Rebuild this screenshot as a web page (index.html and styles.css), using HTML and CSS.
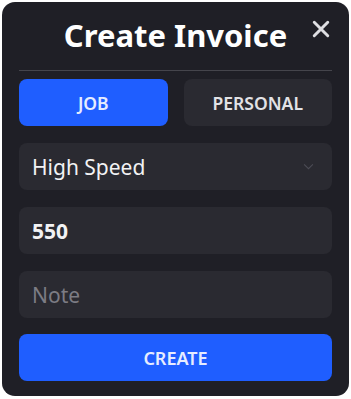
FILE: index.html
```html
<!DOCTYPE html>
<html>
<head>
  <title>Create Invoice</title>
  <link rel="stylesheet" href="styles.css">
</head>
<body>
  <div class="panel">
    <div class="panel-header">
      <h1>Create Invoice</h1>
      <button class="close-button" aria-label="Close">
        <svg viewBox="0 0 16 16" width="16" height="16">
          <path d="M2 2 L14 14 M14 2 L2 14" stroke="currentColor" stroke-width="2.6" stroke-linecap="round"/>
        </svg>
      </button>
    </div>
    <div class="divider"></div>
    <div class="type-group">
      <button class="type-button active">Job</button>
      <button class="type-button">Personal</button>
    </div>
    <div class="fields">
      <div class="field select-field">
        <span>High Speed</span>
        <svg class="chevron-icon" viewBox="0 0 12 8">
          <path d="M1 1.5 L6 6.5 L11 1.5" fill="none" stroke="currentColor" stroke-width="1.2"/>
        </svg>
      </div>
      <div class="field amount-field">550</div>
      <div class="field note-field">Note</div>
      <button class="create-button">Create</button>
    </div>
  </div>
</body>
</html>
```

FILE: styles.css
```css
body {
  font-family: "Noto Sans", "Open Sans", sans-serif;
  background-color: #ffffff;
  margin: 0;
  padding: 2px;
}
.panel {
  position: relative;
  width: 347px;
  height: 394px;
  box-sizing: border-box;
  background-color: #1f1f26;
  border-radius: 13px;
  padding: 15px 17px 0 17px;
}
.panel-header {
  text-align: center;
}
h1 {
  margin: 0;
  font-size: 31px;
  line-height: 36px;
  font-weight: 700;
  color: #ffffff;
}
.close-button {
  position: absolute;
  top: 17px;
  right: 18px;
  background: none;
  border: none;
  padding: 0;
  color: #dedee2;
  width: 20px;
  height: 20px;
  display: flex;
  align-items: center;
  justify-content: center;
}
.close-button svg {
  width: 18px;
  height: 18px;
}
.divider {
  height: 1px;
  background-color: #45454c;
  margin: 17px 0 8px 0;
}
.type-group {
  display: flex;
  gap: 16px;
  margin-bottom: 17px;
}
.type-button {
  flex: 1;
  height: 47px;
  border: none;
  border-radius: 8px;
  background-color: #2a2a31;
  color: #e2e2e6;
  font-family: inherit;
  font-size: 17.5px;
  font-weight: 600;
  text-transform: uppercase;
}
.type-button.active {
  background-color: #1f5eff;
  color: #e6ecff;
}
.fields {
  display: flex;
  flex-direction: column;
  gap: 17px;
}
.field {
  height: 47px;
  box-sizing: border-box;
  background-color: #2a2a31;
  border-radius: 8px;
  padding: 0 13px;
  display: flex;
  align-items: center;
  font-size: 21px;
  color: #f2f2f4;
}
.select-field {
  justify-content: space-between;
}
.chevron-icon {
  width: 11px;
  height: 7px;
  color: #4c4c55;
  margin-right: 5px;
}
.amount-field {
  font-weight: 700;
}
.note-field {
  color: #7c7c84;
}
.create-button {
  height: 47px;
  border: none;
  border-radius: 8px;
  background-color: #1f5eff;
  color: #e6ecff;
  font-family: inherit;
  font-size: 18px;
  font-weight: 600;
  text-transform: uppercase;
  margin-top: -1px;
}
```
